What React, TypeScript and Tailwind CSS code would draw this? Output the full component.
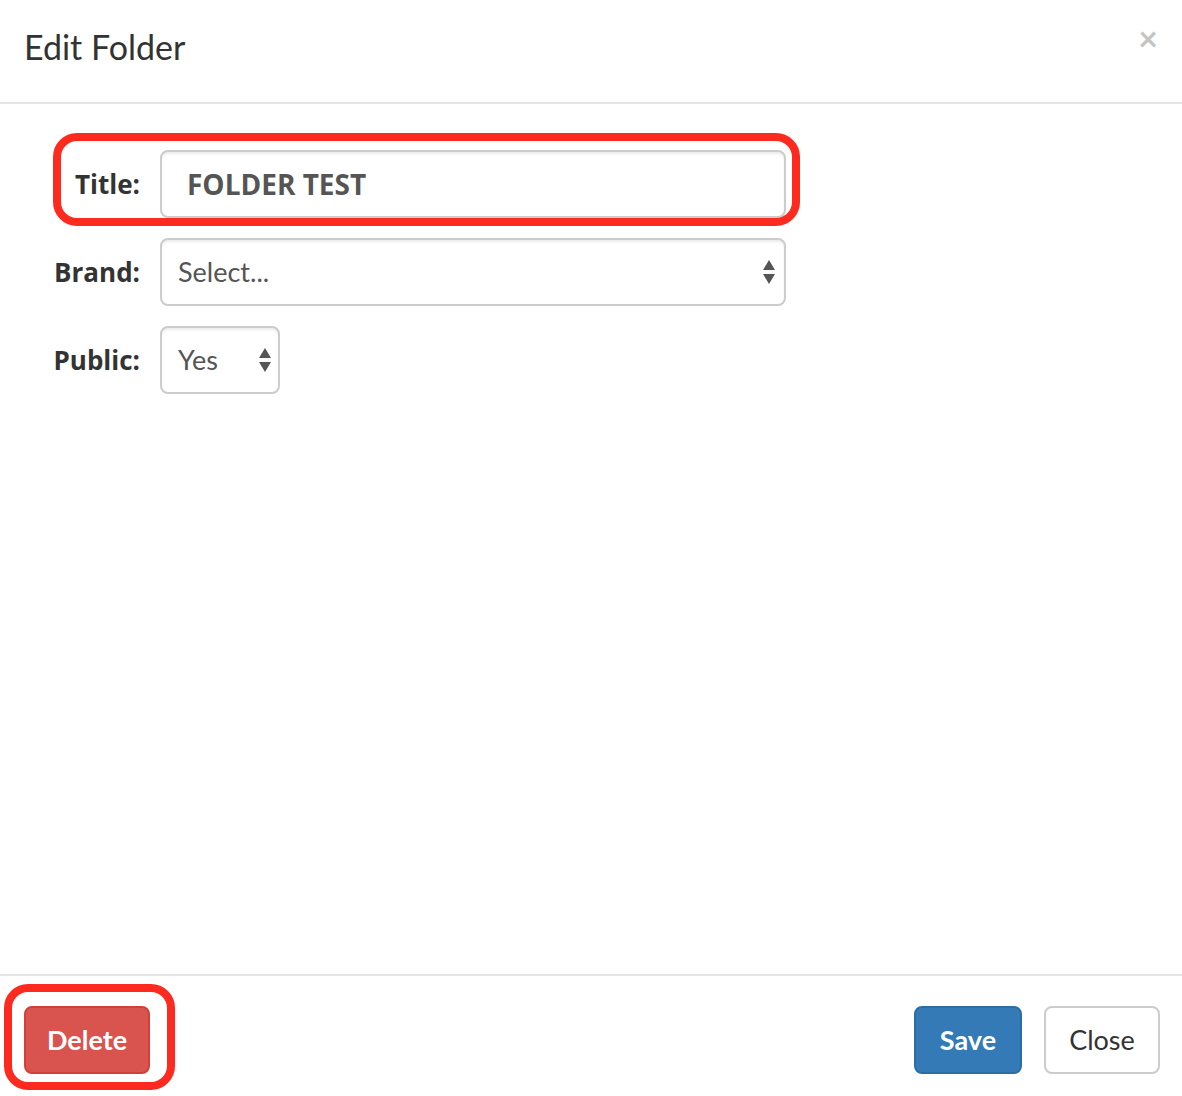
import { useState } from "react";

const sans = "font-['Lato','Noto_Sans',sans-serif]";
const open = "font-['Open_Sans','Noto_Sans',sans-serif]";

function Arrows() {
  return (
    <svg width="14" height="26" viewBox="0 0 14 26" className="shrink-0">
      <path d="M7 1 L13 11 L1 11 Z" fill="#555" />
      <path d="M1 15 L13 15 L7 25 Z" fill="#555" />
    </svg>
  );
}

function Highlight({ className }: { className: string }) {
  return (
    <div
      className={`pointer-events-none absolute rounded-[24px] border-[8px] border-[#fd2a20] ${className}`}
    />
  );
}

export default function App() {
  const [title, setTitle] = useState("FOLDER TEST");

  return (
    <div className={`flex h-[1096px] w-[1182px] flex-col bg-white ${sans}`}>
      {/* Header */}
      <div className="flex h-[104px] items-start justify-between border-b-2 border-[#e5e5e5] pl-6 pr-6">
        <h4 className="mt-[25px] text-[34px] leading-[44px] text-[#333]">Edit Folder</h4>
        <button className="mt-[21px] text-[34px] font-bold leading-[34px] text-[#c4c4c4]">
          ×
        </button>
      </div>

      {/* Body */}
      <div className="flex flex-1 flex-col gap-5 pt-[46px]">
        <div className="relative flex items-center">
          <Highlight className="-top-[17px] left-[53px] h-[93px] w-[747px]" />
          <label className={`w-[140px] text-right text-[26px] font-bold text-[#333] ${open}`}>
            Title:
          </label>
          <input
            value={title}
            onChange={(e) => setTitle(e.target.value)}
            className={`ml-5 h-[68px] w-[626px] rounded-lg border-2 border-[#ccc] px-[25px] text-[28px] font-bold text-[#555] shadow-[inset_0_2px_2px_rgba(0,0,0,0.075)] outline-none ${open}`}
          />
        </div>

        <div className="flex items-center">
          <label className={`w-[140px] text-right text-[26px] font-bold text-[#333] ${open}`}>
            Brand:
          </label>
          <div className="ml-5 flex h-[68px] w-[626px] items-center justify-between rounded-lg border-2 border-[#ccc] pl-4 pr-[8px] shadow-[inset_0_2px_2px_rgba(0,0,0,0.075)]">
            <span className="text-[27px] text-[#555]">Select...</span>
            <Arrows />
          </div>
        </div>

        <div className="flex items-center">
          <label className={`w-[140px] text-right text-[26px] font-bold text-[#333] ${open}`}>
            Public:
          </label>
          <div className="ml-5 flex h-[68px] w-[120px] items-center justify-between rounded-lg border-2 border-[#ccc] pl-4 pr-[6px] shadow-[inset_0_2px_2px_rgba(0,0,0,0.075)]">
            <span className="text-[27px] text-[#555]">Yes</span>
            <Arrows />
          </div>
        </div>
      </div>

      {/* Footer */}
      <div className="flex h-[122px] items-start justify-between border-t-2 border-[#e5e5e5] pl-6 pr-[22px] pt-[30px]">
        <div className="relative">
          <Highlight className="-left-[20px] -top-[22px] h-[106px] w-[171px]" />
          <button className="h-[68px] w-[126px] rounded-lg border-2 border-[#d43f3a] bg-[#d9534f] text-[27px] font-bold text-white">
            Delete
          </button>
        </div>
        <div className="flex gap-[22px]">
          <button className="h-[68px] w-[108px] rounded-lg border-2 border-[#2e6da4] bg-[#337ab7] text-[27px] font-bold text-white">
            Save
          </button>
          <button className="h-[68px] w-[116px] rounded-lg border-2 border-[#ccc] bg-white text-[27px] text-[#333]">
            Close
          </button>
        </div>
      </div>
    </div>
  );
}
